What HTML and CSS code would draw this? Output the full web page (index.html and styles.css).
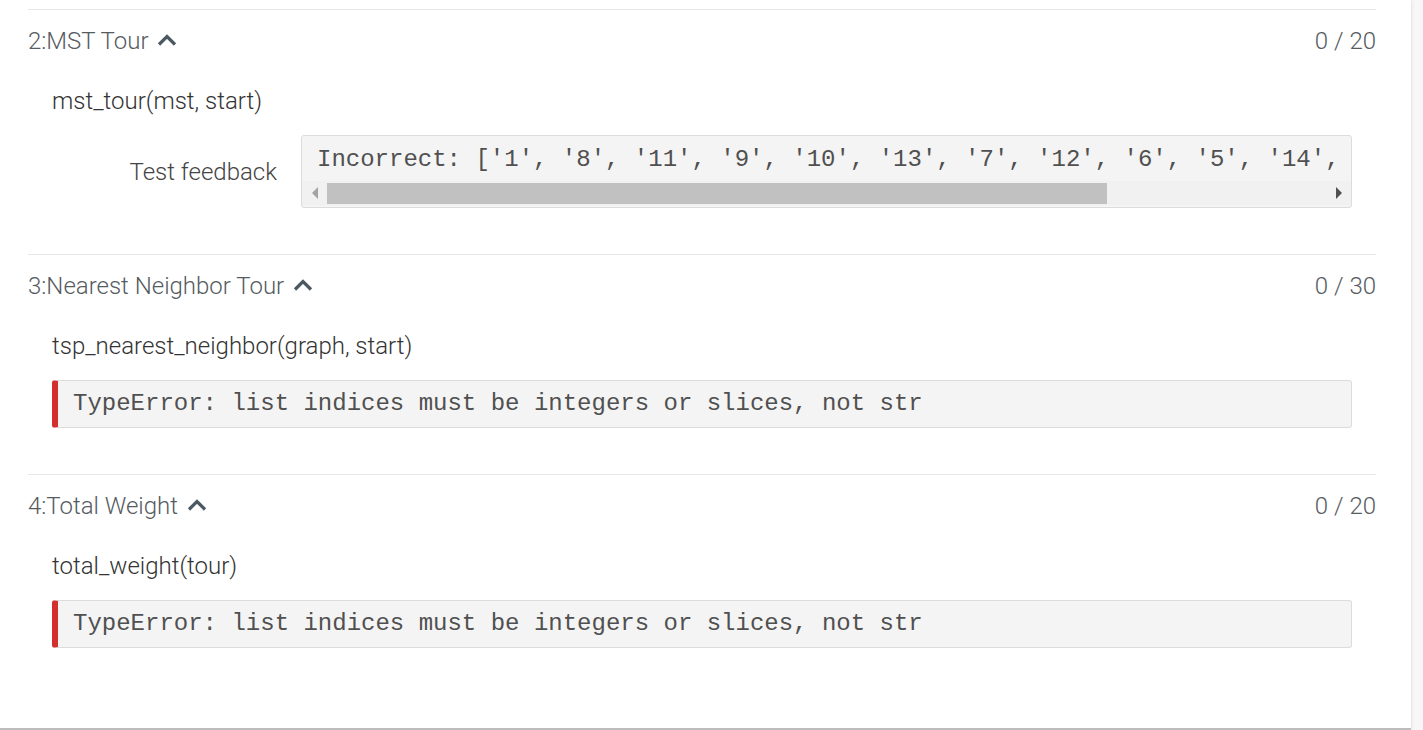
FILE: index.html
```html
<!DOCTYPE html>
<html>
<head>
<meta charset="utf-8">
<link rel="stylesheet" href="styles.css">
</head>
<body>
<div class="page">
  <div class="panel">
    <section class="test">
      <div class="head">
        <div class="title">2:MST Tour
          <svg class="chev" width="20" height="14" viewBox="0 0 20 14"><path d="M2 11.5 L10 3.5 L18 11.5" fill="none" stroke="#4b5963" stroke-width="3.2"/></svg>
        </div>
        <div class="score">0 / 20</div>
      </div>
      <div class="body">
        <div class="func">mst_tour(mst, start)</div>
        <div class="feedback">
          <div class="label">Test feedback</div>
          <div class="codebox">
            <div class="codeline">Incorrect: ['1', '8', '11', '9', '10', '13', '7', '12', '6', '5', '14', '4', '3', '2', '1']</div>
            <div class="scrollbar">
              <span class="arrow left"></span>
              <div class="track"><div class="thumb"></div></div>
              <span class="arrow right"></span>
            </div>
          </div>
        </div>
      </div>
    </section>
    <section class="test">
      <div class="head">
        <div class="title">3:Nearest Neighbor Tour
          <svg class="chev" width="20" height="14" viewBox="0 0 20 14"><path d="M2 11.5 L10 3.5 L18 11.5" fill="none" stroke="#4b5963" stroke-width="3.2"/></svg>
        </div>
        <div class="score">0 / 30</div>
      </div>
      <div class="body">
        <div class="func">tsp_nearest_neighbor(graph, start)</div>
        <div class="error">TypeError: list indices must be integers or slices, not str</div>
      </div>
    </section>
    <section class="test">
      <div class="head">
        <div class="title">4:Total Weight
          <svg class="chev" width="20" height="14" viewBox="0 0 20 14"><path d="M2 11.5 L10 3.5 L18 11.5" fill="none" stroke="#4b5963" stroke-width="3.2"/></svg>
        </div>
        <div class="score">0 / 20</div>
      </div>
      <div class="body">
        <div class="func">total_weight(tour)</div>
        <div class="error">TypeError: list indices must be integers or slices, not str</div>
      </div>
    </section>
  </div>
</div>
</body>
</html>
```
FILE: styles.css
```css
html, body {
  margin: 0;
  padding: 0;
  background: #f7f7f7;
  height: 100%;
  overflow: hidden;
}
.page {
  display: flex;
  height: 730px;
}
.panel {
  width: 1411px;
  box-sizing: border-box;
  background: #fff;
  padding: 9px 35px 34px 28px;
  border-bottom: 2px solid #bdbdbd;
  box-shadow: 1px 0 3px rgba(0,0,0,0.08);
  height: 730px;
  font-family: Roboto, "Liberation Sans", sans-serif;
}
.test {
  border-top: 1px solid #e8e8e8;
  padding: 16px 0 46px;
}
.head {
  display: flex;
  justify-content: space-between;
  align-items: center;
  height: 30px;
  font-size: 24px;
  font-weight: 300;
  color: #555b61;
}
.title {
  display: flex;
  align-items: center;
  gap: 9px;
}
.chev {
  display: block;
  margin-top: -2px;
}
.body {
  padding: 0 24px;
}
.func {
  margin-top: 30px;
  line-height: 30px;
  font-size: 24px;
  font-weight: 300;
  color: #333;
  margin-bottom: 19px;
}
.feedback {
  display: flex;
  align-items: center;
  gap: 24px;
}
.label {
  width: 225px;
  text-align: right;
  font-size: 24px;
  font-weight: 300;
  color: #444;
}
.codebox {
  flex: 1;
  min-width: 0;
  border: 1px solid #dcdcdc;
  border-radius: 3px;
  background: #f4f4f4;
  overflow: hidden;
  padding-bottom: 2px;
}
.codeline {
  font-family: "Liberation Mono", "Courier New", monospace;
  font-size: 24px;
  line-height: 34px;
  color: #505050;
  white-space: pre;
  padding: 7px 15px 4px;
  overflow: hidden;
}
.scrollbar {
  display: flex;
  align-items: center;
  height: 24px;
  background: #f1f1f1;
}
.arrow {
  width: 25px;
  height: 24px;
  display: flex;
  align-items: center;
  justify-content: center;
  flex: none;
}
.arrow::before {
  content: "";
  width: 0;
  height: 0;
  border-top: 6px solid transparent;
  border-bottom: 6px solid transparent;
}
.arrow.left::before {
  border-right: 6px solid #a3a3a3;
}
.arrow.right::before {
  border-left: 6px solid #505050;
}
.track {
  flex: 1;
  height: 24px;
  display: flex;
  align-items: center;
}
.thumb {
  width: 780px;
  height: 21px;
  background: #c1c1c1;
}
.error {
  border: 1px solid #dcdcdc;
  border-left: 6px solid #d32f2f;
  border-radius: 3px;
  background: #f4f4f4;
  font-family: "Liberation Mono", "Courier New", monospace;
  font-size: 24px;
  line-height: 34px;
  color: #505050;
  padding: 6px 15px;
  white-space: pre;
}
```
